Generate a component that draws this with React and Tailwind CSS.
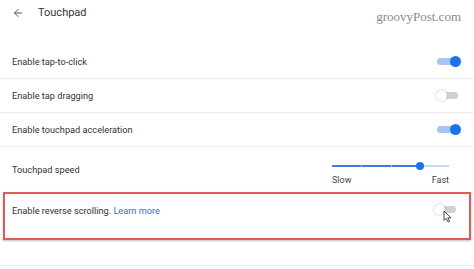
import { ArrowLeft } from 'lucide-react';

function Toggle({ on }) {
  // compact Chrome OS style switch
  return (
    <div className="relative w-[24px] h-[12px] flex items-center">
      <div className={`h-[7px] w-[21px] rounded-full ${on ? 'bg-[#a8c4f2]' : 'bg-[#d0d0d0]'}`} />
      {on ? (
        <div className="absolute right-0 top-[0.5px] w-[11px] h-[11px] rounded-full bg-[#1a73e8]" />
      ) : (
        <div className="absolute left-[-1px] top-[0.5px] w-[11px] h-[11px] rounded-full bg-white shadow-[0_0_2px_rgba(0,0,0,0.35)]" />
      )}
    </div>
  );
}

function Row({ label, on }) {
  return (
    <div className="h-[34px] flex items-center justify-between pl-[12px] pr-[13px] border-b border-[#ededed]">
      <span>{label}</span>
      <Toggle on={on} />
    </div>
  );
}

export default function App() {
  return (
    <div className="w-[474px] h-[269px] overflow-hidden bg-white text-[9.2px] text-[#333] font-['Roboto',sans-serif]">
      <header className="h-[26px] flex items-center pl-[12px] pr-[12px]">
        <ArrowLeft size={12} strokeWidth={2} className="text-[#555]" />
        <span className="ml-[14px] text-[11px]">Touchpad</span>
        <span className="ml-auto mt-[8px] mr-[1px] text-[13px] text-[#8a8a8a] font-['Liberation_Serif',serif]">
          groovyPost.com
        </span>
      </header>

      <div className="mt-[19px]">
        <Row label="Enable tap-to-click" on />
        <Row label="Enable tap dragging" on={false} />
        <Row label="Enable touchpad acceleration" on />

        <div className="h-[45px] flex items-center justify-between pl-[12px] pr-[25px]">
          <span className="mt-[1px]">Touchpad speed</span>
          <div className="w-[117px] flex flex-col mt-[10px]">
            <div className="relative h-[8px] flex items-center">
              <div className="h-[2px] w-[88px] bg-[#3b7ddb]" />
              <div className="h-[2px] flex-1 bg-[#c9d9f3]" />
              <div className="absolute left-[29px] w-[1px] h-[2px] bg-[#9fbce9]" />
              <div className="absolute left-[59px] w-[1px] h-[2px] bg-[#9fbce9]" />
              <div className="absolute left-[84px] w-[8px] h-[8px] rounded-full bg-[#1a73e8]" />
            </div>
            <div className="flex justify-between text-[9px] text-[#444] mt-[4px]">
              <span>Slow</span>
              <span>Fast</span>
            </div>
          </div>
        </div>

        <div className="relative mx-[3px] h-[48px] border-2 border-[#e05a5a] shadow-[0_1px_2px_rgba(0,0,0,0.25)] flex items-start justify-between pl-[7px] pr-[10px] pt-[10px]">
          <span>
            Enable reverse scrolling. <span className="text-[#1a73e8]">Learn more</span>
          </span>
          <div className="mt-[-1px]">
            <Toggle on={false} />
          </div>
          <svg
            className="absolute left-[438px] top-[16px]"
            width="9"
            height="13"
            viewBox="0 0 9 13"
          >
            <path d="M1 1 L1 10.5 L3.3 8.4 L5 12 L6.5 11.3 L4.9 7.8 L8 7.8 Z" fill="#fff" stroke="#333" strokeWidth="0.9" strokeLinejoin="round" />
          </svg>
        </div>

        <div className="mt-[25px] border-b border-[#ededed]" />
      </div>
    </div>
  );
}
